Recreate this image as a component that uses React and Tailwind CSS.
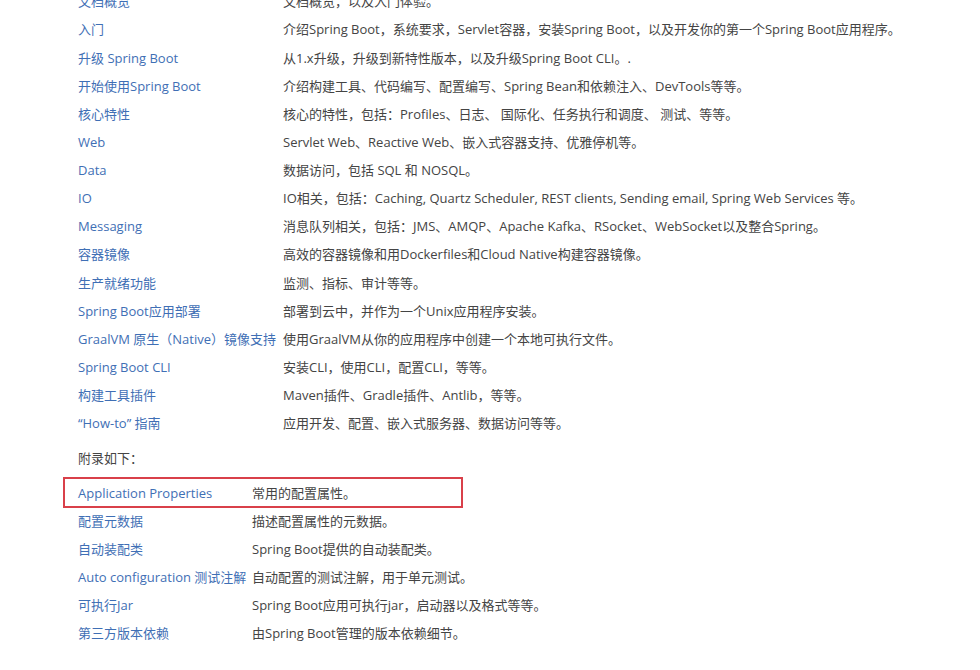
import React from "react";

const rows1 = [
  ["文档概览", "文档概览，以及入门体验。"],
  ["入门", "介绍Spring Boot，系统要求，Servlet容器，安装Spring Boot，以及开发你的第一个Spring Boot应用程序。"],
  ["升级 Spring Boot", "从1.x升级，升级到新特性版本，以及升级Spring Boot CLI。."],
  ["开始使用Spring Boot", "介绍构建工具、代码编写、配置编写、Spring Bean和依赖注入、DevTools等等。"],
  ["核心特性", "核心的特性，包括：Profiles、日志、 国际化、任务执行和调度、 测试、等等。"],
  ["Web", "Servlet Web、Reactive Web、嵌入式容器支持、优雅停机等。"],
  ["Data", "数据访问，包括 SQL 和 NOSQL。"],
  ["IO", "IO相关，包括：Caching, Quartz Scheduler, REST clients, Sending email, Spring Web Services 等。"],
  ["Messaging", "消息队列相关，包括：JMS、AMQP、Apache Kafka、RSocket、WebSocket以及整合Spring。"],
  ["容器镜像", "高效的容器镜像和用Dockerfiles和Cloud Native构建容器镜像。"],
  ["生产就绪功能", "监测、指标、审计等等。"],
  ["Spring Boot应用部署", "部署到云中，并作为一个Unix应用程序安装。"],
  ["GraalVM 原生（Native）镜像支持", "使用GraalVM从你的应用程序中创建一个本地可执行文件。"],
  ["Spring Boot CLI", "安装CLI，使用CLI，配置CLI，等等。"],
  ["构建工具插件", "Maven插件、Gradle插件、Antlib，等等。"],
  ["\u201cHow-to\u201d 指南", "应用开发、配置、嵌入式服务器、数据访问等等。"],
];

const rows2 = [
  ["Application Properties", "常用的配置属性。", true],
  ["配置元数据", "描述配置属性的元数据。"],
  ["自动装配类", "Spring Boot提供的自动装配类。"],
  ["Auto configuration 测试注解", "自动配置的测试注解，用于单元测试。"],
  ["可执行Jar", "Spring Boot应用可执行jar，启动器以及格式等等。"],
  ["第三方版本依赖", "由Spring Boot管理的版本依赖细节。"],
];

export default function App() {
  return (
    <div
      className="w-[980px] h-[670px] overflow-hidden bg-white text-[13px] text-[#444]"
      style={{ fontFamily: '"Open Sans", "Noto Sans CJK SC", sans-serif' }}
    >
      <div className="mt-[-12px] pl-[78px] flex flex-col">
        {rows1.map(([a, b]) => (
          <div key={a} className="flex items-center h-[28.13px] whitespace-nowrap">
            <div className="w-[205px] shrink-0 text-[#3f6fb5]">{a}</div>
            <div>{b}</div>
          </div>
        ))}
        <div className="h-[42px] flex items-center mt-[0px]">附录如下：</div>
        {rows2.map(([a, b, hl]) => (
          <div key={a} className="relative flex items-center h-[28px] whitespace-nowrap">
            {hl && (
              <div className="absolute left-[-15px] top-[-3px] w-[400px] h-[31px] border-2 border-[#d9404a]" />
            )}
            <div className="w-[174px] shrink-0 text-[#3f6fb5]">{a}</div>
            <div>{b}</div>
          </div>
        ))}
      </div>
    </div>
  );
}
